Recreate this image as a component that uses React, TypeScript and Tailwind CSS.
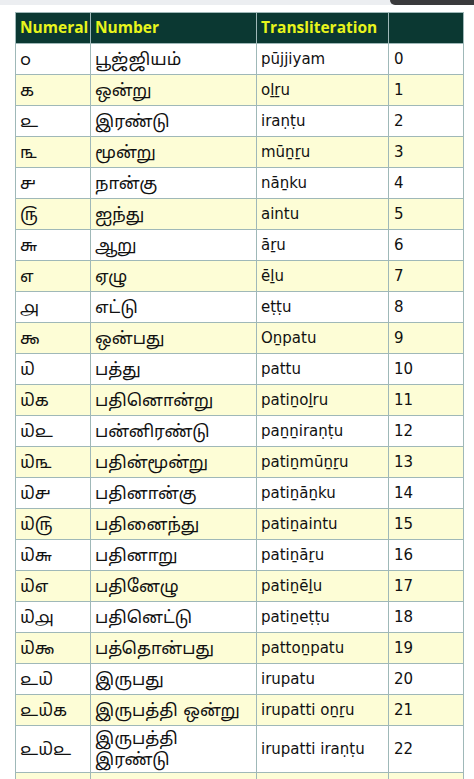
import React from "react";

const rows: [string, string, string, string][] = [
    ["௦", "பூஜ்ஜியம்", "pūjjiyam", "0"],
    ["௧", "ஒன்று", "oḻṟu", "1"],
    ["௨", "இரண்டு", "iraṇṭu", "2"],
    ["௩", "மூன்று", "mūṉṟu", "3"],
    ["௪", "நான்கு", "nāṉku", "4"],
    ["௫", "ஐந்து", "aintu", "5"],
    ["௬", "ஆறு", "āṟu", "6"],
    ["௭", "ஏழு", "ēḻu", "7"],
    ["௮", "எட்டு", "eṭṭu", "8"],
    ["௯", "ஒன்பது", "Oṉpatu", "9"],
    ["௰", "பத்து", "pattu", "10"],
    ["௰௧", "பதினொன்று", "patiṉoḻru", "11"],
    ["௰௨", "பன்னிரண்டு", "paṉṉiraṇṭu", "12"],
    ["௰௩", "பதின்மூன்று", "patiṉmūṉṟu", "13"],
    ["௰௪", "பதினான்கு", "patiṉāṉku", "14"],
    ["௰௫", "பதினைந்து", "patiṉaintu", "15"],
    ["௰௬", "பதினாறு", "patiṉāṟu", "16"],
    ["௰௭", "பதினேழு", "patiṉēḻu", "17"],
    ["௰௮", "பதினெட்டு", "patiṉeṭṭu", "18"],
    ["௰௯", "பத்தொன்பது", "pattoṉpatu", "19"],
    ["௨௰", "இருபது", "irupatu", "20"],
    ["௨௰௧", "இருபத்தி ஒன்று", "irupatti oṉṟu", "21"],
    ["௨௰௨", "இருபத்தி இரண்டு", "irupatti iraṇṭu", "22"],
    ["௨௰௩", "இருபத்தி மூன்று", "irupatti mūṉṟu", "23"],
];

export default function App() {
    return (
        <div className="w-[474px] h-[779px] overflow-hidden bg-white font-['DejaVu_Sans','Noto_Sans','Noto_Sans_Tamil',sans-serif] text-[#111]">
            {/* top strip */}
            <div className="h-[5px] bg-[#eceef1] flex justify-end">
                <div className="w-[84px] h-[5px] bg-[#3a3a3c] rounded-bl-[6px]" />
            </div>

            <div className="pt-[7px] pl-[15px]">
                <table className="border-collapse table-fixed w-[448px] text-[15px]">
                    <colgroup>
                        <col className="w-[75px]" />
                        <col className="w-[166px]" />
                        <col className="w-[132px]" />
                        <col className="w-[75px]" />
                    </colgroup>
                    {/* Header */}
                    <thead>
                        <tr className="bg-[#0b3832] h-[31px]">
                            <th className="border border-[#9fb8b8] px-[4px] text-left font-bold text-[#e8f51c] font-['Open_Sans',sans-serif] text-[15.5px]">Numeral</th>
                            <th className="border border-[#9fb8b8] px-[4px] text-left font-bold text-[#e8f51c] font-['Open_Sans',sans-serif] text-[15.5px]">Number</th>
                            <th className="border border-[#9fb8b8] px-[4px] text-left font-bold text-[#e8f51c] font-['Open_Sans',sans-serif] text-[15.5px]">Transliteration</th>
                            <th className="border border-[#9fb8b8] px-[4px]"></th>
                        </tr>
                    </thead>
                    <tbody>
                        {rows.map((r, idx) => (
                            <tr key={idx} className={`h-[31px] ${idx % 2 === 1 ? "bg-[#fdfdd6]" : "bg-white"}`}>
                                <td className="border border-[#9fb8b8] px-[4px] py-[2px] leading-[21px] text-[17px]">{r[0]}</td>
                                <td className="border border-[#9fb8b8] px-[4px] py-[2px] leading-[21px] text-[17px]">{r[1]}</td>
                                <td className="border border-[#9fb8b8] px-[4px] py-[2px] leading-[21px]">{r[2]}</td>
                                <td className="border border-[#9fb8b8] px-[5px] py-[2px] leading-[21px]">{r[3]}</td>
                            </tr>
                        ))}
                    </tbody>
                </table>
            </div>
        </div>
    );
}
